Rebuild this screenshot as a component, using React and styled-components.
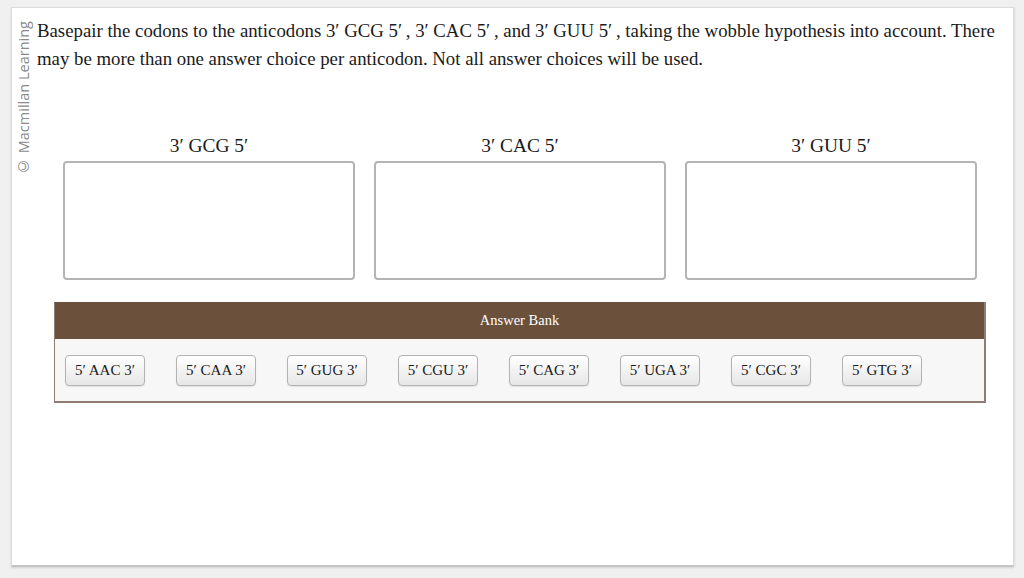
import React from 'react';
import styled, { createGlobalStyle } from 'styled-components';

const GlobalStyle = createGlobalStyle`
  html, body {
    margin: 0;
    padding: 0;
    background: #f0f0f0;
  }
  body {
    font-family: "Liberation Serif", "Times New Roman", serif;
    color: #1a1a1a;
  }
`;

const anticodons = ["3′ GCG 5′", "3′ CAC 5′", "3′ GUU 5′"];
const choices = [
  "5′ AAC 3′", "5′ CAA 3′", "5′ GUG 3′", "5′ CGU 3′",
  "5′ CAG 3′", "5′ UGA 3′", "5′ CGC 3′", "5′ GTG 3′",
];

function App() {
  return (
    <Page>
      <GlobalStyle />
      <Card>
        <Gutter>
          <Watermark>© Macmillan Learning</Watermark>
        </Gutter>
        <Content>
          <Question>
            Basepair the codons to the anticodons 3′ GCG 5′&thinsp;, 3′ CAC 5′&thinsp;, and 3′ GUU 5′&thinsp;, taking the wobble
            hypothesis into account. There may be more than one answer choice per anticodon. Not all answer choices will be used.
          </Question>

          <Zones>
            {anticodons.map((label) => (
              <Zone key={label}>
                <ZoneLabel>{label}</ZoneLabel>
                <DropBox />
              </Zone>
            ))}
          </Zones>

          <Bank>
            <BankHeader>Answer Bank</BankHeader>
            <BankBody>
              {choices.map((c) => (
                <Chip key={c}>{c}</Chip>
              ))}
            </BankBody>
          </Bank>
        </Content>
      </Card>
    </Page>
  );
}

export default App;

const Page = styled.div`
  width: 1024px;
  height: 578px;
  box-sizing: border-box;
  padding: 7px 10px 0 11px;
  overflow: hidden;
`;

const Card = styled.div`
  display: flex;
  height: 560px;
  box-sizing: border-box;
  background: #fff;
  border: 1px solid #dcdcdc;
  border-bottom: 2px solid #c4c4c4;
  box-shadow: 0 1px 2px rgba(0, 0, 0, 0.12), 2px 0 0 #ececec;
`;

const Gutter = styled.div`
  width: 25px;
  flex-shrink: 0;
  display: flex;
  justify-content: center;
  padding-top: 20px;
`;

const Watermark = styled.div`
  writing-mode: vertical-rl;
  transform: rotate(180deg);
  font-family: "Open Sans", "DejaVu Sans", sans-serif;
  font-size: 14.5px;
  color: #8a8a8a;
  white-space: nowrap;
  height: 148px;
  line-height: 16px;
  padding-left: 2px;
`;

const Content = styled.div`
  flex: 1;
  padding-top: 9px;
`;

const Question = styled.p`
  margin: 0;
  font-size: 18.8px;
  line-height: 28px;
  padding-right: 10px;
`;

const Zones = styled.div`
  display: grid;
  grid-template-columns: repeat(3, 1fr);
  gap: 19px;
  margin: 59px 36px 0 26px;
`;

const Zone = styled.div`
  display: flex;
  flex-direction: column;
  align-items: center;
`;

const ZoneLabel = styled.div`
  font-size: 19.4px;
  line-height: 28px;
  margin-bottom: 1px;
`;

const DropBox = styled.div`
  width: 100%;
  height: 119px;
  box-sizing: border-box;
  border: 2px solid #b4b4b4;
  border-radius: 4px;
  background: #fff;
`;

const Bank = styled.div`
  margin: 22px 27px 0 17px;
  border: 1px solid #8e7d70;
  border-width: 0 2px 2px 1px;
`;

const BankHeader = styled.div`
  height: 37px;
  background: #6b503b;
  color: #fff;
  font-size: 14.5px;
  display: flex;
  align-items: center;
  justify-content: center;
`;

const BankBody = styled.div`
  display: flex;
  gap: 31px;
  padding: 16px 10px 15px;
  background: #f7f7f7;
`;

const Chip = styled.div`
  width: 80px;
  height: 31px;
  box-sizing: border-box;
  display: flex;
  align-items: center;
  justify-content: center;
  font-size: 15px;
  border: 1px solid #b2b2b2;
  border-radius: 4px;
  background: linear-gradient(#ffffff, #e6e6e6);
  box-shadow: 0 1px 1px rgba(0, 0, 0, 0.08);
`;
